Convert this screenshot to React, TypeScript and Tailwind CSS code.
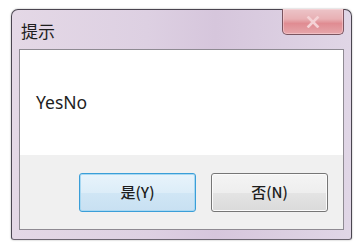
import React from "react";

export default function App() {
  const cjk = { fontFamily: '"Noto Sans CJK SC", "Noto Sans", sans-serif' } as React.CSSProperties;
  return (
    <div className="w-[362px] h-[247px] bg-white relative overflow-hidden">
      <div className="absolute left-[11px] top-[9px] w-[341px] h-[231px] rounded-t-[7px] rounded-b-[3px] border border-[#4a4550] border-b-[#6b6470] bg-[linear-gradient(90deg,#e4d8e6_0%,#ddd0e2_40%,#d6c6dc_60%,#e0d6e6_100%)] flex flex-col shadow-[0_0_2px_rgba(0,0,0,0.35)]">
        <div className="h-[39px] flex items-start justify-between pl-[9px] pr-[7px] shrink-0">
          <div className="mt-[11px] text-[17px] leading-[20px] text-[#1e1e1e]" style={cjk}>提示</div>
          <div className="w-[62px] h-[26px] -mt-px rounded-b-[5px] border border-[#7a5560] border-t-0 bg-[linear-gradient(180deg,#ecc4c8_0%,#e8b0b4_40%,#e08c92_58%,#e6a6ab_100%)] flex items-center justify-center shadow-[inset_0_0_0_1px_rgba(255,225,228,0.45)]">
            <svg width="14" height="12" viewBox="0 0 14 12">
              <path d="M2.5 1.5 L11.5 10.5 M11.5 1.5 L2.5 10.5" stroke="#f4d2d5" strokeWidth="2.6" strokeLinecap="square" />
            </svg>
          </div>
        </div>
        <div className="mx-[7px] mb-[9px] flex-1 border border-[#8e8a92] flex flex-col">
          <div className="h-[105px] bg-white pl-[16px] pt-[41px]">
            <div className="text-[17.5px] leading-[22px] text-[#1e1e1e]" style={{ fontFamily: '"Noto Sans", sans-serif' }}>YesNo</div>
          </div>
          <div className="flex-1 bg-[#f0f0f0] flex items-start justify-end gap-[15px] pt-[18px] pr-[15px]">
            <div className="w-[117px] h-[39px] rounded-[3px] border border-[#3a9ed8] shadow-[inset_0_0_0_1px_#a8d8f2] bg-[linear-gradient(180deg,#e8f3fb_0%,#dcedf8_50%,#d0e6f5_51%,#c8e0f2_100%)] flex items-center justify-center text-[15px] font-medium text-[#1e1e1e]" style={cjk}>
              是(Y)
            </div>
            <div className="w-[117px] h-[39px] rounded-[3px] border border-[#767676] shadow-[inset_0_0_0_1px_#fbfbfb] bg-[linear-gradient(180deg,#f4f4f4_0%,#eeeeee_50%,#e4e4e4_51%,#dadada_100%)] flex items-center justify-center text-[15px] font-medium text-[#1e1e1e]" style={cjk}>
              否(N)
            </div>
          </div>
        </div>
      </div>
    </div>
  );
}
